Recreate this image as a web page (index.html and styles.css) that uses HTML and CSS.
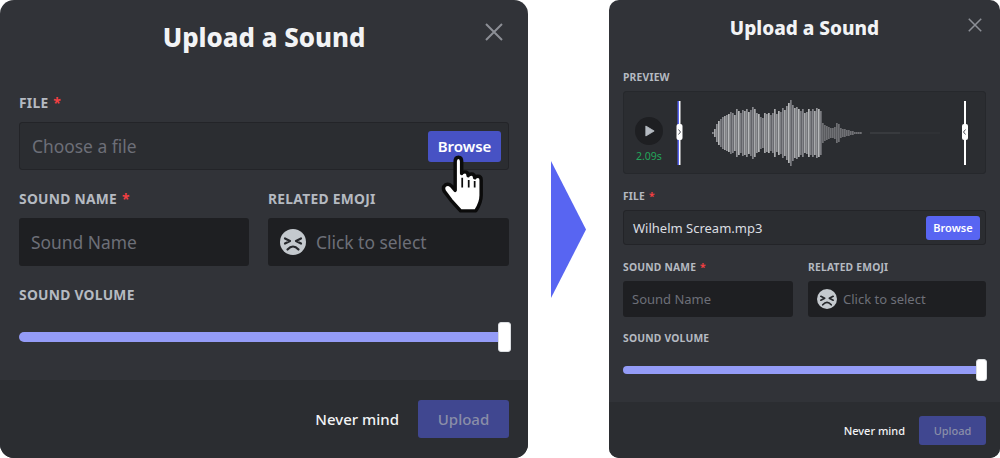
FILE: index.html
```html
<!DOCTYPE html>
<html lang="en">
<head>
  <meta charset="UTF-8">
  <meta name="viewport" content="width=device-width, initial-scale=1.0">
  <title>Upload a Sound</title>
  <link rel="stylesheet" href="styles.css">
</head>
<body>
  <section class="modal modal-large">
    <header class="modal-header">
      <h1>Upload a Sound</h1>
      <svg class="close" viewBox="0 0 18 18"><path d="M1 1 17 17M17 1 1 17"/></svg>
    </header>
    <div class="modal-body">
      <div class="label">File <span class="req">*</span></div>
      <div class="file-input">
        <span class="placeholder">Choose a file</span>
        <button class="browse browse-hover">Browse</button>
      </div>
      <div class="two-col">
        <div>
          <div class="label">Sound Name <span class="req">*</span></div>
          <div class="text-input"><span class="placeholder">Sound Name</span></div>
        </div>
        <div>
          <div class="label">Related Emoji</div>
          <div class="text-input">
            <svg class="emoji" viewBox="0 0 26 26"><circle cx="13" cy="13" r="13" fill="#c4c9ce"/><path d="M5 9.500 10 12 5 14.500M21 9.500 16 12 21 14.500M7.500 20.500Q13 14.500 18.500 20.500" fill="none" stroke="#26282c" stroke-width="2.200" stroke-linecap="round" stroke-linejoin="round"/></svg>
            <span class="placeholder">Click to select</span>
          </div>
        </div>
      </div>
      <div class="label">Sound Volume</div>
      <div class="slider">
        <div class="track"></div>
        <div class="grabber"></div>
      </div>
    </div>
    <footer class="modal-footer">
      <span class="never-mind">Never mind</span>
      <button class="upload">Upload</button>
    </footer>
    <svg class="hand" viewBox="0 0 46 60">
      <path d="M13 7Q13 3 16 3Q19 3 19 7V18Q19.500 16.500 22 16.500Q25 16.500 25 20Q25.500 18.500 28 18.500Q31 18.500 31 22Q31.500 20.500 34 20.500Q37 20.500 37 24V38Q37 45 32 52.500H18Q14 48 9 42.500L3 34.500Q1 30.500 4 28.500Q7 27 9.500 29.500L13 33.500Z" fill="#fff" stroke="#0b0b0b" stroke-width="3.200" stroke-linejoin="round"/>
      <path d="M19.500 22V31M25.500 24V31M31 25V31" fill="none" stroke="#0b0b0b" stroke-width="1.600"/>
    </svg>
  </section>

  <div class="arrow-col"><div class="arrow"></div></div>

  <section class="modal modal-small">
    <header class="modal-header">
      <h1>Upload a Sound</h1>
      <svg class="close" viewBox="0 0 18 18"><path d="M1 1 17 17M17 1 1 17"/></svg>
    </header>
    <div class="modal-body">
      <div class="label">Preview</div>
      <div class="preview">
        <div class="player">
          <div class="play"><svg viewBox="0 0 12 14"><path d="M1 1 11 7 1 13Z" fill="#b5bac1" stroke="#b5bac1" stroke-linejoin="round"/></svg></div>
          <span class="duration">2.09s</span>
        </div>
        <svg class="wave" id="wave" viewBox="0 0 290 64">
          <rect x="0.500" y="0" width="1.500" height="64" fill="#5865f2"/>
          <rect x="2" y="0" width="1.500" height="64" fill="#fff"/>
          <rect x="-0.500" y="23" width="6" height="16" rx="2" fill="#fff"/>
          <path d="M1.500 28.500 3.500 31 1.500 33.500" fill="none" stroke="#4e5058" stroke-width="1"/>
          <rect x="287" y="0" width="2" height="64" fill="#fff"/>
          <rect x="285" y="23" width="6" height="16" rx="2" fill="#fff"/>
          <path d="M288.500 28.500 286.500 31 288.500 33.500" fill="none" stroke="#4e5058" stroke-width="1"/>
        </svg>
      </div>
      <div class="label">File <span class="req">*</span></div>
      <div class="file-input">
        <span class="file-name">Wilhelm Scream.mp3</span>
        <button class="browse">Browse</button>
      </div>
      <div class="two-col">
        <div>
          <div class="label">Sound Name <span class="req">*</span></div>
          <div class="text-input"><span class="placeholder">Sound Name</span></div>
        </div>
        <div>
          <div class="label">Related Emoji</div>
          <div class="text-input">
            <svg class="emoji" viewBox="0 0 26 26"><circle cx="13" cy="13" r="13" fill="#c4c9ce"/><path d="M5 9.500 10 12 5 14.500M21 9.500 16 12 21 14.500M7.500 20.500Q13 14.500 18.500 20.500" fill="none" stroke="#26282c" stroke-width="2.200" stroke-linecap="round" stroke-linejoin="round"/></svg>
            <span class="placeholder">Click to select</span>
          </div>
        </div>
      </div>
      <div class="label">Sound Volume</div>
      <div class="slider">
        <div class="track"></div>
        <div class="grabber"></div>
      </div>
    </div>
    <footer class="modal-footer">
      <span class="never-mind">Never mind</span>
      <button class="upload">Upload</button>
    </footer>
  </section>

  <script src="script.js"></script>
</body>
</html>
```

FILE: styles.css
```css
* {
  box-sizing: border-box;
}

body {
  font-family: "Noto Sans", Arial, sans-serif;
  margin: 0;
  height: 458px;
  overflow: hidden;
  display: flex;
  background-color: #ffffff;
}

.modal {
  position: relative;
  display: flex;
  flex-direction: column;
  height: 458px;
  overflow: hidden;
  background-color: #313338;
}

.modal-large {
  width: 528px;
  flex: none;
  border-radius: 14px;
  --pad: 19px;
  --head: 93px;
  --label-h: 20px;
  --label-gap: 9px;
  --label-size: 13.800px;
  --section-gap: 19px;
  --field-h: 48px;
  --col-gap: 19px;
  --field-pad: 12px;
  --text-size: 17.400px;
  --emoji-gap: 10px;
  --title-size: 25.800px;
  --title-top: 21px;
  --close: 18px;
  --close-x: 25px;
  --close-y: 23px;
  --emoji: 26px;
  --foot: 78px;
  --foot-gap: 19px;
  --btn-text: 15px;
}

.modal-small {
  width: 391px;
  flex: none;
  border-radius: 10px;
  --pad: 14px;
  --head: 70px;
  --label-h: 14px;
  --label-gap: 7px;
  --label-size: 10.300px;
  --section-gap: 15px;
  --field-h: 36px;
  --col-gap: 14px;
  --field-pad: 9px;
  --text-size: 13px;
  --emoji-gap: 6px;
  --title-size: 19px;
  --title-top: 16px;
  --close: 14px;
  --close-x: 18px;
  --close-y: 18px;
  --emoji: 20px;
  --foot: 56px;
  --foot-gap: 14px;
  --btn-text: 11px;
}

.modal-header {
  height: var(--head);
  flex: none;
  padding-top: var(--title-top);
}

.modal-header h1 {
  margin: 0;
  font-size: var(--title-size);
  line-height: 1.3;
  font-weight: 800;
  text-align: center;
  color: #f2f3f5;
}

.close {
  position: absolute;
  top: var(--close-y);
  right: var(--close-x);
  width: var(--close);
  height: var(--close);
}

.close path {
  fill: none;
  stroke: #8c8f96;
  stroke-width: 2;
}

.modal-body {
  flex: 1;
  padding: 0 var(--pad);
}

.label {
  height: var(--label-h);
  line-height: var(--label-h);
  margin-bottom: var(--label-gap);
  font-size: var(--label-size);
  font-weight: 700;
  letter-spacing: 0.02em;
  text-transform: uppercase;
  color: #b5bac1;
}

.req {
  color: #f23f42;
  margin-left: 1px;
}

.placeholder {
  color: #6d6f78;
  font-size: var(--text-size);
}

.file-name {
  color: #dbdee1;
  font-size: var(--text-size);
}

.file-input {
  height: var(--field-h);
  margin-bottom: var(--section-gap);
  display: flex;
  align-items: center;
  justify-content: space-between;
  padding: 0 7px 0 var(--field-pad);
  background-color: #2b2d31;
  border: 1px solid #232428;
  border-radius: 3px;
}

.modal-small .file-input {
  height: 35px;
  padding-right: 5px;
}

.browse {
  border: 0;
  border-radius: 3px;
  padding: 0;
  font-family: inherit;
  font-weight: 600;
  color: #ffffff;
  background-color: #5865f2;
  width: 54px;
  height: 24px;
  font-size: 11px;
}

.browse-hover {
  background-color: #4752c4;
  width: 73px;
  height: 31px;
  font-size: 15px;
}

.two-col {
  display: grid;
  grid-template-columns: 230px 241px;
  column-gap: var(--col-gap);
  margin-bottom: var(--section-gap);
}

.modal-small .two-col {
  grid-template-columns: 170px 178px;
  column-gap: 15px;
  margin-bottom: 14px;
}

.text-input {
  height: var(--field-h);
  display: flex;
  align-items: center;
  gap: var(--emoji-gap);
  padding: 0 var(--field-pad);
  background-color: #1e1f22;
  border-radius: 3px;
}

.emoji {
  width: var(--emoji);
  height: var(--emoji);
  flex: none;
}

.modal-large .slider {
  height: 30px;
  margin-top: 17px;
  margin-right: -2px;
}

.modal-small .slider {
  height: 22px;
  margin-top: 14px;
  margin-right: -1px;
}

.slider {
  position: relative;
}

.track {
  position: absolute;
  left: 0;
  right: 4px;
  top: 50%;
  height: 10px;
  margin-top: -5px;
  border-radius: 5px;
  background-color: #949cf7;
}

.modal-small .track {
  height: 8px;
  margin-top: -4px;
}

.grabber {
  position: absolute;
  right: 0;
  top: 0;
  width: 13px;
  height: 100%;
  border-radius: 3px;
  background-color: #ffffff;
  border: 1px solid #dbdee1;
}

.modal-small .grabber {
  width: 11px;
}

.modal-footer {
  height: var(--foot);
  flex: none;
  display: flex;
  align-items: center;
  justify-content: flex-end;
  padding: 0 var(--pad);
  gap: var(--foot-gap);
  background-color: #2b2d31;
}

.never-mind {
  color: #f2f3f5;
  font-size: var(--btn-text);
  font-weight: 500;
}

.upload {
  border: 0;
  border-radius: 3px;
  padding: 0;
  font-family: inherit;
  font-size: var(--btn-text);
  font-weight: 500;
  color: #8a8ea8;
  background-color: #404790;
  width: 91px;
  height: 38px;
}

.modal-small .upload {
  width: 67px;
  height: 29px;
}

.hand {
  position: absolute;
  left: 441px;
  top: 154px;
  width: 50px;
  height: 65px;
}

.arrow-col {
  flex: 1;
  display: flex;
  align-items: center;
  padding-left: 23px;
}

.arrow {
  width: 35px;
  height: 137px;
  margin-top: 1px;
  background-color: #5865f2;
  clip-path: polygon(0 0, 100% 50%, 0 100%);
}

.preview {
  height: 83px;
  margin-bottom: var(--section-gap);
  display: flex;
  align-items: center;
  background-color: #2b2d31;
  border: 1px solid #26282c;
  border-radius: 3px;
  padding-left: 11px;
}

.player {
  width: 42px;
  flex: none;
  display: flex;
  flex-direction: column;
  align-items: flex-start;
  gap: 4px;
  padding-top: 14px;
}

.play {
  width: 28px;
  height: 28px;
  border-radius: 50%;
  background-color: #1e1f22;
  display: flex;
  align-items: center;
  justify-content: center;
}

.play svg {
  width: 10px;
  height: 12px;
  margin-left: 1px;
}

.duration {
  color: #23a55a;
  font-size: 10.500px;
  margin-left: 1px;
}

.wave {
  width: 290px;
  height: 64px;
  flex: none;
  overflow: visible;
}
```

FILE: script.js
```js
const wave = document.getElementById('wave');
const amps = [1, 4, 9, 12, 14, 16, 17, 18, 19, 21, 20, 18, 24, 22, 20, 23, 22, 24, 21, 23, 26, 24, 20, 19, 16, 15, 20, 19, 20, 18, 20, 24, 19, 22, 21, 25, 23, 27, 30, 33, 28, 25, 26, 24, 22, 24, 20, 21, 24, 22, 24, 22, 25, 24, 22, 10, 8, 7, 6, 5, 5, 6, 10, 9, 5, 4, 4, 3, 3, 2, 2, 1, 1, 1, 1];
const shades = ['#86878c', '#a8a9ac', '#929397', '#b8b9bb', '#7c7d82'];

function addBar(x, y, w, h, fill) {
  const bar = document.createElementNS('http://www.w3.org/2000/svg', 'rect');
  bar.setAttribute('x', x);
  bar.setAttribute('y', y);
  bar.setAttribute('width', w);
  bar.setAttribute('height', h);
  bar.setAttribute('fill', fill);
  wave.appendChild(bar);
}

amps.forEach((amp, i) => {
  const fill = i > 54 ? '#6f7074' : shades[i % shades.length];
  addBar(35 + i * 2, 32 - amp, 1.7, amp * 2, fill);
});

// quiet tail of the sound
addBar(193, 31.500, 30, 1, '#47484d');
addBar(223, 31.500, 40, 1, '#35363b');
```
